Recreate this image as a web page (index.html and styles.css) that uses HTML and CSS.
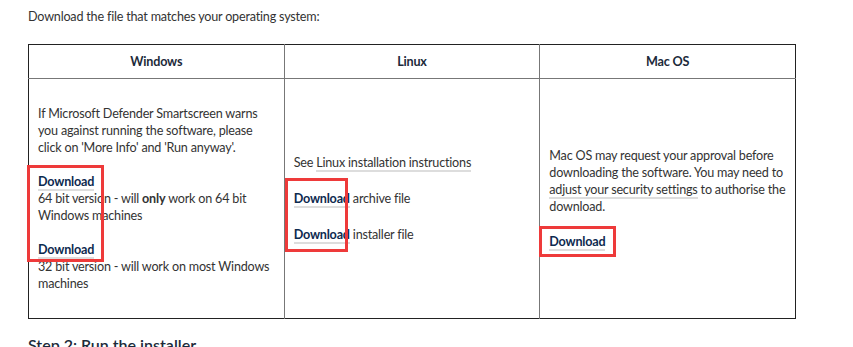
FILE: index.html
```html
<!DOCTYPE html>
<html lang="en">
<head>
<meta charset="utf-8">
<title>Download</title>
<link rel="stylesheet" href="styles.css">
</head>
<body>
<main class="page">
  <p class="intro">Download the file that matches your operating system:</p>
  <div class="table-wrap">
    <table class="downloads">
      <thead>
        <tr><th>Windows</th><th>Linux</th><th>Mac OS</th></tr>
      </thead>
      <tbody>
        <tr>
          <td>
            <p>If Microsoft Defender Smartscreen warns you against running the software, please click on 'More Info' and 'Run anyway'.</p>
            <p><a class="dl" href="#">Download</a><br>64 bit version - will <strong>only</strong> work on 64 bit Windows machines</p>
            <p><a class="dl" href="#">Download</a><br>32 bit version - will work on most Windows machines</p>
          </td>
          <td class="linux">
            <p>See <a class="txt" href="#">Linux installation instructions</a></p>
            <p><a class="dl" href="#">Download</a> archive file</p>
            <p><a class="dl" href="#">Download</a> installer file</p>
          </td>
          <td class="mac">
            <p>Mac OS may request your approval before downloading the software. You may need to <a class="txt" href="#">adjust your security settings</a> to authorise the download.</p>
            <p><a class="dl" href="#">Download</a></p>
          </td>
        </tr>
      </tbody>
    </table>
    <span class="mark mark-win"></span>
    <span class="mark mark-linux"></span>
    <span class="mark mark-mac"></span>
  </div>
  <h3 class="step">Step 2: Run the installer</h3>
</main>
</body>
</html>
```
FILE: styles.css
```css
html, body {
  margin: 0;
  padding: 0;
  background: #fff;
}
body {
  font-family: "Lato", "Open Sans", sans-serif;
  font-size: 12.6px;
  letter-spacing: -0.2px;
  line-height: 17px;
  color: #333;
}
.page {
  padding: 8px 0 0 28px;
  width: 768px;
}
.intro {
  margin: 0 0 19px;
}
.table-wrap {
  position: relative;
  width: 768px;
}
.downloads {
  width: 768px;
  border-collapse: collapse;
  table-layout: fixed;
  border: 1px solid #222;
}
.downloads th {
  font-weight: 700;
  color: #1c2a3a;
  text-align: center;
  padding: 8px 9px;
  border-left: 1px solid #777;
  border-bottom: 1px solid #777;
}
.downloads td {
  vertical-align: middle;
  text-align: left;
  padding: 9px 9px;
  border-left: 1px solid #777;
}
.downloads th:first-child,
.downloads td:first-child {
  border-left: 1px solid #222;
}
.downloads td p {
  margin: 17px 0;
}
.downloads td.linux p {
  margin: 19px 0;
}
.downloads td.mac p + p {
  margin-top: 18px;
}
a {
  text-decoration: none;
}
.dl {
  color: #0d2a4f;
  font-weight: 700;
  border-bottom: 2px solid #ddd;
}
.txt {
  color: #333;
  border-bottom: 2px solid #ddd;
}
strong {
  font-weight: 700;
}
.mark {
  position: absolute;
  border: 3px solid #ee3a3a;
  box-sizing: border-box;
}
.mark-win {
  left: -1px;
  top: 121px;
  width: 77px;
  height: 97px;
}
.mark-linux {
  left: 257px;
  top: 134px;
  width: 63px;
  height: 74px;
}
.mark-mac {
  left: 511px;
  top: 182px;
  width: 77px;
  height: 31px;
}
.step {
  margin: 17px 0 0;
  font-size: 16px;
  font-weight: 600;
  letter-spacing: 0;
  color: #1c2a3a;
}
```
